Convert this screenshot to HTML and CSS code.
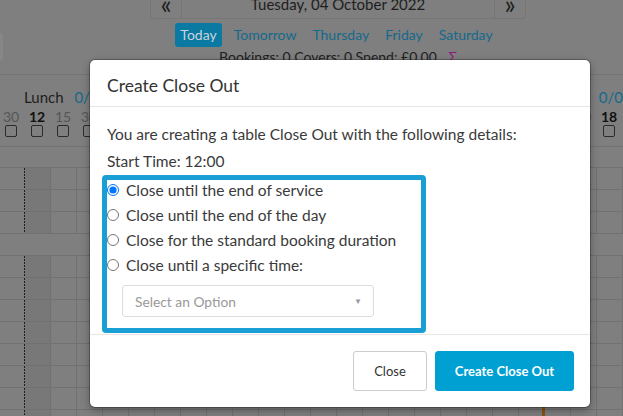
FILE: index.html
```html
<!DOCTYPE html>
<html lang="en">
<head>
<meta charset="utf-8">
<title>Create Close Out</title>
<link rel="stylesheet" href="styles.css">
</head>
<body>
<div class="page">
  <header class="top">
    <div class="sidebox"></div>
    <div class="nav">
      <div class="datebar">
        <span class="arrow">«</span>
        <span class="date">Tuesday, 04 October 2022</span>
        <span class="arrow">»</span>
      </div>
      <div class="days">
        <span class="day active">Today</span>
        <span class="day">Tomorrow</span>
        <span class="day">Thursday</span>
        <span class="day">Friday</span>
        <span class="day">Saturday</span>
      </div>
      <div class="stats">Bookings: 0 Covers: 0 Spend: £0.00 <span class="sigma">Σ</span></div>
    </div>
  </header>

  <section class="services">
    <div class="labels">
      <span class="service">Lunch <span class="count">0/0</span></span>
      <span class="service"><span class="count">0/0</span></span>
    </div>
    <div class="times">
      <span class="t">30</span><span class="t hour">12</span><span class="t">15</span><span class="t">30</span><span class="t">45</span><span class="t hour">13</span><span class="t">15</span><span class="t">30</span><span class="t">45</span><span class="t hour">14</span><span class="t">15</span><span class="t">30</span><span class="t">45</span><span class="t hour">15</span><span class="t">15</span><span class="t">30</span><span class="t">45</span><span class="t hour">16</span><span class="t">15</span><span class="t">30</span><span class="t">45</span><span class="t">15</span><span class="t">30</span><span class="t hour">18</span><span class="t">15</span>
    </div>
    <div class="checks">
      <span class="c"><i></i></span><span class="c"><i></i></span><span class="c"><i></i></span><span class="c"><i></i></span><span class="c"><i></i></span><span class="c"><i></i></span><span class="c"><i></i></span><span class="c"><i></i></span><span class="c"><i></i></span><span class="c"><i></i></span><span class="c"><i></i></span><span class="c"><i></i></span><span class="c"><i></i></span><span class="c"><i></i></span><span class="c"><i></i></span><span class="c"><i></i></span><span class="c"><i></i></span><span class="c"><i></i></span><span class="c"><i></i></span><span class="c"><i></i></span><span class="c"><i></i></span><span class="c"><i></i></span><span class="c"><i></i></span><span class="c"><i></i></span><span class="c"><i></i></span>
    </div>
  </section>

  <section class="grid">
    <div class="band first"></div>
    <div class="row"><span class="lead"></span><span class="cur"></span><span class="rest"></span></div>
    <div class="row"><span class="lead"></span><span class="cur"></span><span class="rest"></span></div>
    <div class="row"><span class="lead"></span><span class="cur"></span><span class="rest"></span></div>
    <div class="band"></div>
    <div class="row"><span class="lead"></span><span class="cur"></span><span class="rest"></span></div>
    <div class="row"><span class="lead"></span><span class="cur"></span><span class="rest"></span></div>
    <div class="row"><span class="lead"></span><span class="cur"></span><span class="rest"></span></div>
    <div class="row"><span class="lead"></span><span class="cur"></span><span class="rest"></span></div>
    <div class="row"><span class="lead"></span><span class="cur"></span><span class="rest"></span></div>
    <div class="row"><span class="lead"></span><span class="cur"></span><span class="rest"></span></div>
    <div class="row"><span class="lead"></span><span class="cur"></span><span class="rest"></span></div>
    <div class="row"><span class="lead"></span><span class="cur"></span><span class="rest"></span></div>
    <div class="now"></div>
  </section>
</div>

<div class="modal" role="dialog" aria-labelledby="modal-title">
  <div class="modal-header">
    <h4 class="modal-title" id="modal-title">Create Close Out</h4>
  </div>
  <div class="modal-body">
    <p class="intro">You are creating a table Close Out with the following details:</p>
    <p class="start">Start Time: 12:00</p>
    <div class="options">
      <div class="option-list">
        <label class="option"><input type="radio" name="close" checked> <span>Close until the end of service</span></label>
        <label class="option"><input type="radio" name="close"> <span>Close until the end of the day</span></label>
        <label class="option"><input type="radio" name="close"> <span>Close for the standard booking duration</span></label>
        <label class="option"><input type="radio" name="close"> <span>Close until a specific time:</span></label>
        <div class="select"><span class="placeholder">Select an Option</span><span class="caret">▼</span></div>
      </div>
    </div>
  </div>
  <div class="modal-footer">
    <button class="btn btn-default" type="button">Close</button>
    <button class="btn btn-primary" type="button">Create Close Out</button>
  </div>
</div>
</body>
</html>
```

FILE: styles.css
```css
* { box-sizing: border-box; }

html, body {
  margin: 0;
  padding: 0;
  width: 623px;
  height: 416px;
  overflow: hidden;
}

body {
  background: #7f7f7f;
  font-family: "Lato", "Liberation Sans", sans-serif;
  color: #1e1e1e;
}

.page {
  width: 623px;
}

/* ---------- top navigation ---------- */
.top {
  height: 75px;
  display: flex;
  align-items: flex-start;
  border-bottom: 1px solid #747474;
}

.sidebox {
  width: 3px;
  height: 28px;
  margin-top: 33px;
  background: #868686;
  border-radius: 0 3px 3px 0;
}

.nav {
  flex: 1;
  display: flex;
  flex-direction: column;
  align-items: center;
  padding-left: 50px;
  min-width: 0;
}

.datebar {
  display: flex;
  flex: none;
  width: 376px;
  height: 30px;
  margin-top: -11px;
  border: 1px solid #767676;
  border-top: none;
  border-radius: 0 0 4px 4px;
}

.arrow {
  width: 30px;
  display: flex;
  justify-content: center;
  font-size: 26px;
  line-height: 20px;
  padding-top: 5px;
  color: #1e1e1e;
}

.date {
  flex: 1;
  display: flex;
  justify-content: center;
  border-left: 1px solid #767676;
  border-right: 1px solid #767676;
  font-size: 15px;
  line-height: 20px;
  padding-top: 5px;
}

.days {
  display: flex;
  margin-top: 4px;
  height: 24px;
  flex: none;
}

.day {
  font-size: 14px;
  line-height: 24px;
  padding: 0 8px;
  color: #15698c;
  white-space: nowrap;
}

.day.active {
  background: #0b7aa2;
  color: #c8d4da;
  border-radius: 3px;
  padding: 0 5px;
  margin-right: 4px;
}

.stats {
  font-size: 14px;
  line-height: 20px;
  color: #1e1e1e;
  white-space: nowrap;
  flex: none;
}

.sigma {
  color: #8b1a7a;
  margin-left: 8px;
}

/* ---------- service headers ---------- */
.services {
  height: 72px;
  border-bottom: 1px solid #737373;
}

.labels {
  display: flex;
  justify-content: space-between;
  padding: 12px 0 0 24px;
  height: 33px;
  font-size: 15px;
  line-height: 20px;
  color: #1e1e1e;
}

.count {
  color: #15698c;
  margin-left: 7px;
}

.times, .checks {
  display: grid;
  grid-template-columns: repeat(25, 26px);
  margin-left: -2px;
}

.times {
  height: 17px;
  font-size: 14px;
  line-height: 17px;
  color: #555;
}

.t { text-align: center; }

.t.hour {
  font-weight: 700;
  color: #111;
}

.c {
  display: flex;
  justify-content: center;
}

.c i {
  display: block;
  width: 12px;
  height: 12px;
  border: 1px solid #2b2b2b;
  border-radius: 2px;
}

/* ---------- grid ---------- */
.grid {
  position: relative;
}

.band {
  height: 22px;
  border-bottom: 1px solid #717171;
}

.band.first { height: 21px; }

.row {
  display: flex;
  height: 22px;
  border-bottom: 1px solid #717171;
}

.lead {
  width: 25px;
  background: linear-gradient(to bottom, #1e1e1e 0 2px, transparent 2px 3px) right top / 1px 3px repeat-y;
}

.cur {
  width: 26px;
  background: #787878;
  border-right: 1px solid #717171;
}

.rest {
  flex: 1;
  background: repeating-linear-gradient(to right, transparent 0 25px, #717171 25px 26px);
}

.now {
  position: absolute;
  left: 542px;
  top: 0;
  bottom: 0;
  width: 3px;
  background: #8a5410;
}

/* ---------- modal ---------- */
.modal {
  position: absolute;
  left: 90px;
  top: 60px;
  width: 500px;
  background: #fff;
  border-radius: 5px;
  box-shadow: 0 0 0 1px rgba(0, 0, 0, 0.25), 0 3px 8px rgba(0, 0, 0, 0.35);
  color: #3a3a3a;
  font-family: "Lato", "Liberation Sans", sans-serif;
}

.modal-header {
  height: 47px;
  padding: 0 17px;
  border-bottom: 1px solid #e5e5e5;
  display: flex;
  align-items: center;
}

.modal-title {
  margin: 0;
  padding-top: 5px;
  font-size: 17.5px;
  font-weight: 400;
  color: #333;
}

.modal-body {
  padding: 14px 17px 1px;
}

.intro, .start {
  margin: 0;
  font-size: 15.5px;
  line-height: 27px;
}

.options {
  margin-left: -5px;
  width: 324px;
  height: 158px;
  border: 5px solid #1a9fd4;
  border-radius: 4px;
}

.option-list {
  margin-top: -3px;
}

.option {
  display: flex;
  align-items: center;
  height: 25px;
  font-size: 15.5px;
}

.option input {
  margin: 0 7px 0 0;
  width: 12px;
  height: 12px;
}

.select {
  margin: 8px 0 0 15px;
  width: 252px;
  height: 32px;
  border: 1px solid #ddd;
  border-radius: 3px;
  display: flex;
  align-items: center;
  justify-content: space-between;
  padding: 0 11px 0 12px;
  font-size: 13.8px;
}

.placeholder { color: #999; }

.caret {
  font-size: 8px;
  color: #999;
}

.modal-footer {
  border-top: 1px solid #e5e5e5;
  padding: 16px;
  display: flex;
  justify-content: flex-end;
  gap: 8px;
}

.btn {
  height: 40px;
  font-family: inherit;
  font-size: 13px;
  border-radius: 3px;
  cursor: pointer;
}

.btn-default {
  width: 74px;
  background: #fff;
  border: 1px solid #ccc;
  color: #333;
}

.btn-primary {
  width: 139px;
  background: #00a0d2;
  border: 1px solid #00a0d2;
  color: #fff;
  font-weight: 700;
}
```
